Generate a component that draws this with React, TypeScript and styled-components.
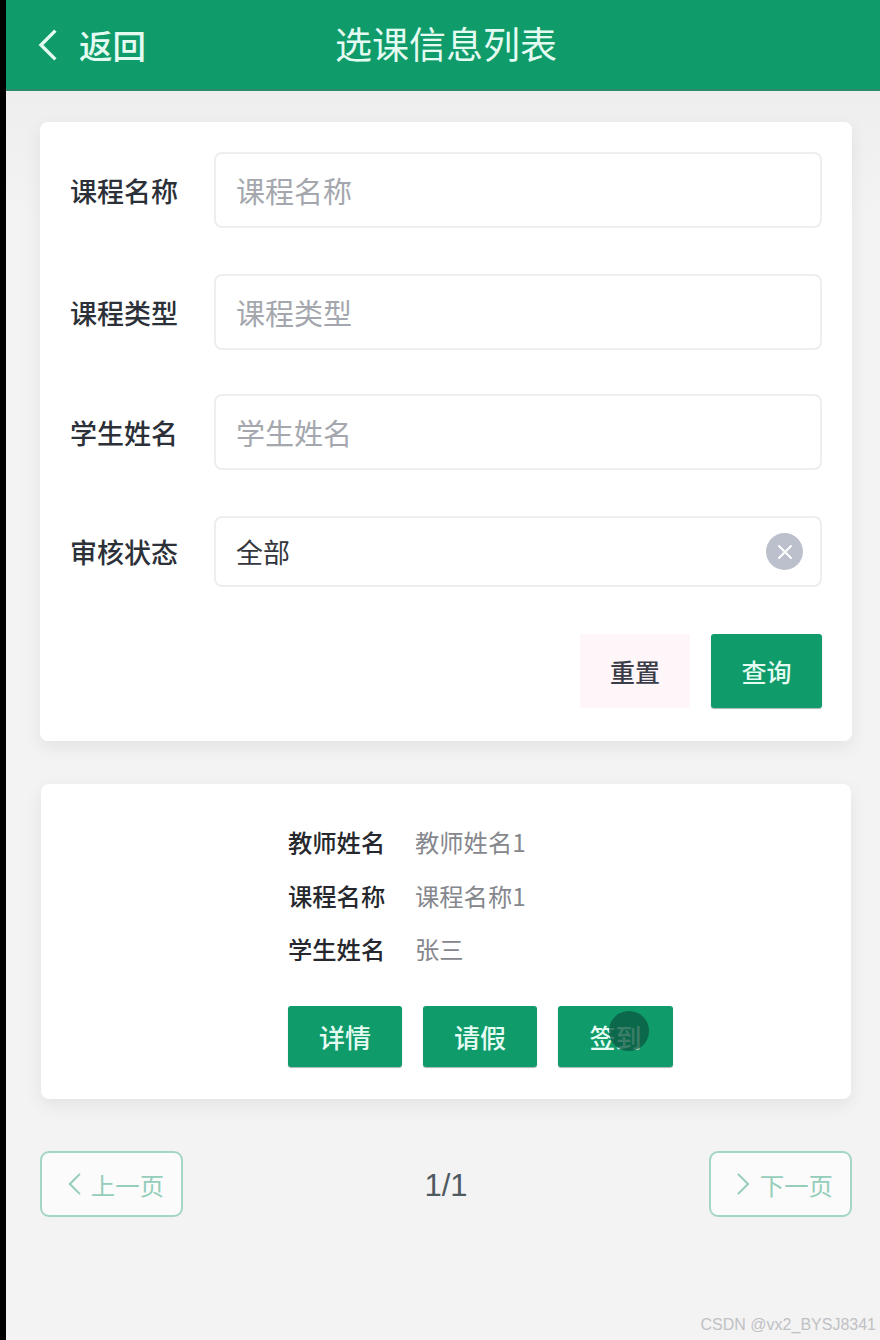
import React from 'react';
import styled, { createGlobalStyle } from 'styled-components';
import { X } from 'lucide-react';

const GlobalStyle = createGlobalStyle`
  html, body {
    margin: 0;
    padding: 0;
    background: #000;
  }
  * { box-sizing: border-box; }
  body {
    font-family: "Noto Sans CJK SC", "Liberation Sans", sans-serif;
  }
`;

const Page = styled.div`
  position: relative;
  height: 1340px;
  margin-left: 6px;
  width: 874px;
  background: #f3f3f4;
  overflow: hidden;
`;

const Header = styled.header`
  height: 91px;
  background: #0f9b6a;
  border-bottom: 2px solid #2f8a69;
  display: flex;
  align-items: center;
  position: relative;
  color: #e4fbf2;
`;

const BackLink = styled.div`
  display: flex;
  align-items: center;
  gap: 21px;
  padding-left: 31px;
  font-size: 33.5px;
  line-height: 1;
  font-weight: 500;
`;

const Title = styled.h1`
  position: absolute;
  left: 329px;
  top: 19px;
  margin: 0;
  font-size: 37px;
  line-height: 48px;
  font-weight: 400;
`;

const Content = styled.main`
  padding: 31px 28px 0 34px;
  background: linear-gradient(#eeeeef, #f3f3f4 120px);
`;

const Card = styled.section`
  background: #fff;
  border-radius: 8px;
  box-shadow: 0 6px 18px rgba(0, 0, 0, 0.07);
`;

const FilterCard = styled(Card)`
  height: 619px;
  padding: 30px 30px 0 30px;
`;

const Field = styled.div<{ $gap: number }>`
  display: flex;
  align-items: center;
  margin-bottom: ${({ $gap }) => $gap}px;
`;

const FieldLabel = styled.label`
  width: 144px;
  font-size: 27px;
  font-weight: 500;
  color: #2c3038;
`;

const InputBox = styled.div<{ $height: number; $filled?: boolean }>`
  flex: 1;
  height: ${({ $height }) => $height}px;
  display: flex;
  align-items: center;
  justify-content: space-between;
  padding: 0 17px 0 20px;
  border: 2px solid #eeeeee;
  border-radius: 8px;
  background: #fff;
  font-size: ${({ $filled }) => ($filled ? 27 : 29)}px;
  color: ${({ $filled }) => ($filled ? '#33363c' : '#a4a7ae')};
`;

const ClearIcon = styled.span`
  width: 37px;
  height: 37px;
  border-radius: 50%;
  background: #bcc0cc;
  color: #fff;
  display: flex;
  align-items: center;
  justify-content: center;
`;

const FormActions = styled.div`
  display: flex;
  justify-content: flex-end;
  gap: 21px;
`;

const ResetButton = styled.button`
  width: 110px;
  height: 74px;
  border: 0;
  background: #fff6fa;
  color: #3a3d47;
  font: inherit;
  font-size: 25px;
  font-weight: 500;
`;

const PrimaryButton = styled.button<{ $width: number; $height: number; $size: number }>`
  width: ${({ $width }) => $width}px;
  height: ${({ $height }) => $height}px;
  border: 0;
  border-radius: 3px;
  background: #0f9b6a;
  color: #e4fbf2;
  font: inherit;
  font-size: ${({ $size }) => $size}px;
  font-weight: 500;
  padding: 0;
  box-shadow: 0 1px 1px rgba(60, 90, 80, 0.45);
`;

const ResultCard = styled(Card)`
  height: 315px;
  margin: 43px 1px 0;
  padding: 31px 0 0 247px;
`;

const InfoRow = styled.div`
  display: flex;
  height: 53.5px;
  font-size: 24.3px;
  line-height: 53.5px;
`;

const InfoLabel = styled.span`
  width: 127px;
  font-weight: 500;
  color: #26282e;
`;

const InfoValue = styled.span`
  color: #85878d;
`;

const ResultActions = styled.div`
  display: flex;
  gap: 21px;
  margin-top: 30px;
`;

const PressWrap = styled.div`
  position: relative;
`;

const TouchDot = styled.span`
  position: absolute;
  left: 51px;
  top: 5px;
  width: 40px;
  height: 40px;
  border-radius: 50%;
  background: rgba(10, 90, 65, 0.78);
  pointer-events: none;
`;

const Pager = styled.nav`
  display: flex;
  justify-content: space-between;
  align-items: center;
  margin-top: 52px;
`;

const PagerButton = styled.div`
  width: 143px;
  height: 66px;
  padding-left: 8px;
  border: 2px solid #a5d6c5;
  border-radius: 9px;
  background: #fbfbfb;
  color: #94cdb9;
  font-size: 24.4px;
  display: flex;
  align-items: center;
  justify-content: center;
  gap: 9px;
`;

const PageCount = styled.span`
  font-size: 31px;
  padding-top: 3px;
  font-family: "Liberation Sans", sans-serif;
  color: #4f5a60;
`;

const Watermark = styled.div`
  position: absolute;
  right: 4px;
  bottom: 5px;
  font-family: "Liberation Sans", sans-serif;
  font-size: 16px;
  line-height: 20px;
  color: #bfc1c3;
`;

const Chevron: React.FC<{ dir: 'left' | 'right'; size: number; weight: number }> = ({ dir, size, weight }) => (
  <svg width={size * 0.62} height={size} viewBox="0 0 16 26" fill="none" stroke="currentColor" strokeWidth={weight}>
    <path d={dir === 'left' ? 'M14 2 3 13l11 11' : 'M2 2l11 11L2 24'} />
  </svg>
);

const filters = [
  { label: '课程名称', gap: 46 },
  { label: '课程类型', gap: 44 },
  { label: '学生姓名', gap: 46 },
];

const info = [
  ['教师姓名', '教师姓名1'],
  ['课程名称', '课程名称1'],
  ['学生姓名', '张三'],
];

export default function App() {
  return (
    <>
      <GlobalStyle />
      <Page>
        <Header>
          <BackLink>
            <Chevron dir="left" size={34} weight={2.6} />
            <span>返回</span>
          </BackLink>
          <Title>选课信息列表</Title>
        </Header>
        <Content>
          <FilterCard>
            {filters.map((f) => (
              <Field key={f.label} $gap={f.gap}>
                <FieldLabel>{f.label}</FieldLabel>
                <InputBox $height={76}>{f.label}</InputBox>
              </Field>
            ))}
            <Field $gap={47}>
              <FieldLabel>审核状态</FieldLabel>
              <InputBox $height={71} $filled>
                全部
                <ClearIcon>
                  <X size={24} strokeWidth={2} />
                </ClearIcon>
              </InputBox>
            </Field>
            <FormActions>
              <ResetButton>重置</ResetButton>
              <PrimaryButton $width={111} $height={74} $size={25}>查询</PrimaryButton>
            </FormActions>
          </FilterCard>

          <ResultCard>
            {info.map(([label, value]) => (
              <InfoRow key={label}>
                <InfoLabel>{label}</InfoLabel>
                <InfoValue>{value}</InfoValue>
              </InfoRow>
            ))}
            <ResultActions>
              <PrimaryButton $width={114} $height={61} $size={26}>详情</PrimaryButton>
              <PrimaryButton $width={114} $height={61} $size={26}>请假</PrimaryButton>
              <PressWrap>
                <PrimaryButton $width={115} $height={61} $size={26}>签到</PrimaryButton>
                <TouchDot />
              </PressWrap>
            </ResultActions>
          </ResultCard>

          <Pager>
            <PagerButton>
              <Chevron dir="left" size={24} weight={2.2} />
              <span>上一页</span>
            </PagerButton>
            <PageCount>1/1</PageCount>
            <PagerButton>
              <Chevron dir="right" size={24} weight={2.2} />
              <span>下一页</span>
            </PagerButton>
          </Pager>
        </Content>
        <Watermark>CSDN @vx2_BYSJ8341</Watermark>
      </Page>
    </>
  );
}
